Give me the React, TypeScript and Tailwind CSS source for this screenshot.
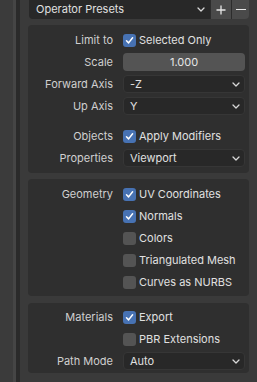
import React from 'react';

const font = { fontFamily: 'Inter, "DejaVu Sans", sans-serif' };

const Chevron = () => (
  <svg width="8" height="5" viewBox="0 0 8 5" className="shrink-0">
    <path d="M1 1 L4 4 L7 1" fill="none" stroke="#d8d8d8" strokeWidth="1.3" strokeLinecap="round" strokeLinejoin="round" />
  </svg>
);

const Check = ({ on }: { on: boolean }) => (
  <div
    className={`w-[13px] h-[13px] rounded-[3px] flex items-center justify-center shrink-0 ${
      on ? 'bg-[#4772b3]' : 'bg-[#545454]'
    }`}
  >
    {on && (
      <svg width="9" height="9" viewBox="0 0 9 9">
        <path d="M1.5 4.8 L3.6 6.9 L7.6 1.8" fill="none" stroke="#ffffff" strokeWidth="1.5" strokeLinecap="round" strokeLinejoin="round" />
      </svg>
    )}
  </div>
);

const Label = ({ text }: { text?: string }) => (
  <div className="w-[85px] shrink-0 text-right text-[#d0d0d0]">{text}</div>
);

const CheckRow = ({ label, text, on }: { label?: string; text: string; on: boolean }) => (
  <div className="flex items-center h-[18px]">
    <Label text={label} />
    <div className="flex items-center gap-[3px] ml-[10px]">
      <Check on={on} />
      <span className="text-[#e0e0e0]">{text}</span>
    </div>
  </div>
);

const SelectRow = ({ label, value }: { label: string; value: string }) => (
  <div className="flex items-center h-[18px]">
    <Label text={label} />
    <div className="ml-[10px] flex-1 h-[18px] rounded-[4px] bg-[#282828] border border-[#363636] flex items-center justify-between pl-[6px] pr-[4px] text-[#e0e0e0]">
      <span>{value}</span>
      <Chevron />
    </div>
  </div>
);

const Panel = ({ children, className }: { children: React.ReactNode; className: string }) => (
  <div className={`rounded-[4px] bg-[#2f2f2f] pr-[4px] flex flex-col ${className}`}>{children}</div>
);

export default function App() {
  return (
    <div className="w-[257px] h-[382px] flex bg-[#3a3a3a] text-[11px] leading-none overflow-hidden" style={font}>
      <div className="w-[13px] bg-[#3b3b3b]" />
      <div className="w-[3px] bg-[#454545]" />
      <div className="w-[4px] bg-[#2a2a2a]" />
      <div className="flex-1 flex flex-col pl-[8px] pr-[8px] bg-[#3a3a3a]">
        <div className="flex h-[19px] ml-[1px]">
          <div className="flex-1 min-w-0 bg-[#282828] rounded-bl-[4px] flex items-center justify-between pl-[7px] pr-[5px] text-[#e0e0e0]">
            <span>Operator Presets</span>
            <Chevron />
          </div>
          <div className="w-[21px] shrink-0 bg-[#4a4a4a] border-l border-[#2c2c2c] flex items-center justify-center">
            <svg width="10" height="10" viewBox="0 0 10 10">
              <path d="M5 0.5 V9.5 M0.5 5 H9.5" stroke="#e6e6e6" strokeWidth="1.3" />
            </svg>
          </div>
          <div className="w-[18px] shrink-0 bg-[#4a4a4a] border-l border-[#2c2c2c] rounded-br-[4px] flex items-center justify-center">
            <div className="w-[10px] h-[1.3px] bg-[#e6e6e6]" />
          </div>
        </div>

        <Panel className="mt-[6px] pt-[6px] pb-[6px]">
          <div className="flex flex-col gap-[4px]">
            <CheckRow label="Limit to" text="Selected Only" on />
            <div className="flex items-center h-[18px]">
              <Label text="Scale" />
              <div className="ml-[10px] flex-1 h-[18px] rounded-[4px] bg-[#545454] flex items-center justify-center text-[#e6e6e6]">1.000</div>
            </div>
            <SelectRow label="Forward Axis" value="-Z" />
            <SelectRow label="Up Axis" value="Y" />
          </div>
          <div className="flex flex-col gap-[4px] mt-[12px]">
            <CheckRow label="Objects" text="Apply Modifiers" on />
            <SelectRow label="Properties" value="Viewport" />
          </div>
        </Panel>

        <Panel className="mt-[6px] pt-[6px] pb-[5px]">
          <div className="flex flex-col gap-[4px]">
            <CheckRow label="Geometry" text="UV Coordinates" on />
            <CheckRow text="Normals" on />
            <CheckRow text="Colors" on={false} />
            <CheckRow text="Triangulated Mesh" on={false} />
            <CheckRow text="Curves as NURBS" on={false} />
          </div>
        </Panel>

        <Panel className="mt-[7px] pt-[5px] pb-[3px]">
          <div className="flex flex-col gap-[4px]">
            <CheckRow label="Materials" text="Export" on />
            <CheckRow text="PBR Extensions" on={false} />
            <SelectRow label="Path Mode" value="Auto" />
          </div>
        </Panel>
      </div>
    </div>
  );
}
